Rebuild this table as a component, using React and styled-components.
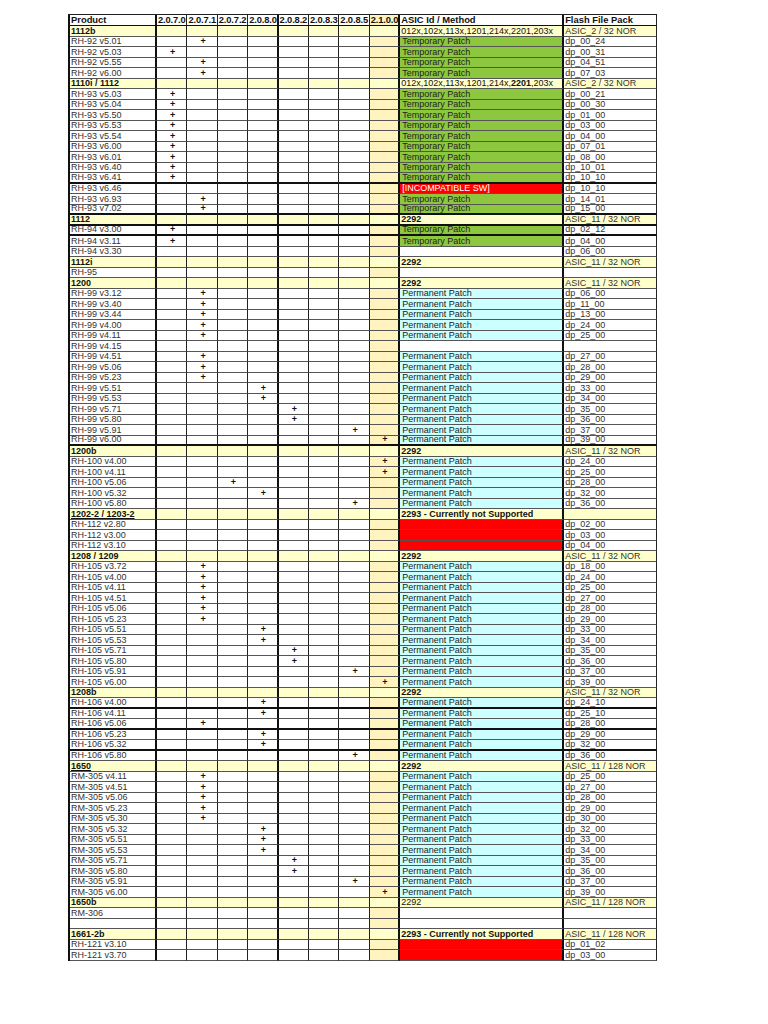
import styled, { createGlobalStyle } from "styled-components";

const GlobalStyle = createGlobalStyle`
    html, body {
        margin: 0;
        padding: 0;
        background: #fff;
    }
    body {
        font-family: "Liberation Sans", Arial, sans-serif;
    }
`

const VERSIONS = ['2.0.7.0', '2.0.7.1', '2.0.7.2', '2.0.8.0', '2.0.8.2', '2.0.8.3', '2.0.8.5', '2.1.0.0'];

// columns that end with a heavy rule
const THICK_AFTER = { product: true, 3: true, 7: true, asic: true };

const YELLOW = '#FFFFCC';
const COL_YELLOW = '#FFF4C0';
const GREEN = '#8DC63F';
const CYAN = '#CCFFFF';
const RED = '#FF0000';

const OLD_ASIC = '012x,102x,113x,1201,214x,2201,203x';

const g = (name, asic, flash, opts = {}) => ({ type: 'group', name, asic, flash, ...opts });
const r = (name, v, method, flash, heavy) => ({ type: 'item', name, v, method, flash, heavy });

const ROWS = [
    g('1112b', OLD_ASIC, 'ASIC_2 / 32 NOR', { plainAsic: true }),
    r('RH-92 v5.01', 1, 'tp', 'dp_00_24'),
    r('RH-92 v5.03', 0, 'tp', 'dp_00_31'),
    r('RH-92 v5.55', 1, 'tp', 'dp_04_51'),
    r('RH-92 v6.00', 1, 'tp', 'dp_07_03'),
    g('1110i / 1112', 'bold2201', 'ASIC_2 / 32 NOR', { plainAsic: true }),
    r('RH-93 v5.03', 0, 'tp', 'dp_00_21'),
    r('RH-93 v5.04', 0, 'tp', 'dp_00_30'),
    r('RH-93 v5.50', 0, 'tp', 'dp_01_00'),
    r('RH-93 v5.53', 0, 'tp', 'dp_03_00'),
    r('RH-93 v5.54', 0, 'tp', 'dp_04_00'),
    r('RH-93 v6.00', 0, 'tp', 'dp_07_01'),
    r('RH-93 v6.01', 0, 'tp', 'dp_08_00'),
    r('RH-93 v6.40', 0, 'tp', 'dp_10_01'),
    r('RH-93 v6.41', 0, 'tp', 'dp_10_10', true),
    r('RH-93 v6.46', -1, 'inc', 'dp_10_10'),
    r('RH-93 v6.93', 1, 'tp', 'dp_14_01'),
    r('RH-93 v7.02', 1, 'tp', 'dp_15_00', true),
    g('1112', '2292', 'ASIC_11 / 32 NOR', { heavy: true }),
    r('RH-94 v3.00', 0, 'tp', 'dp_02_12', true),
    r('RH-94 v3.11', 0, 'tp', 'dp_04_00'),
    r('RH-94 v3.30', -1, 'none', 'dp_06_00'),
    g('1112i', '2292', 'ASIC_11 / 32 NOR'),
    r('RH-95', -1, 'none', ''),
    g('1200', '2292', 'ASIC_11 / 32 NOR'),
    r('RH-99 v3.12', 1, 'pp', 'dp_06_00'),
    r('RH-99 v3.40', 1, 'pp', 'dp_11_00'),
    r('RH-99 v3.44', 1, 'pp', 'dp_13_00'),
    r('RH-99 v4.00', 1, 'pp', 'dp_24_00'),
    r('RH-99 v4.11', 1, 'pp', 'dp_25_00'),
    r('RH-99 v4.15', -1, 'none', ''),
    r('RH-99 v4.51', 1, 'pp', 'dp_27_00'),
    r('RH-99 v5.06', 1, 'pp', 'dp_28_00'),
    r('RH-99 v5.23', 1, 'pp', 'dp_29_00'),
    r('RH-99 v5.51', 3, 'pp', 'dp_33_00'),
    r('RH-99 v5.53', 3, 'pp', 'dp_34_00'),
    r('RH-99 v5.71', 4, 'pp', 'dp_35_00'),
    r('RH-99 v5.80', 4, 'pp', 'dp_36_00'),
    r('RH-99 v5.91', 6, 'pp', 'dp_37_00'),
    r('RH-99 v6.00', 7, 'pp', 'dp_39_00', true),
    g('1200b', '2292', 'ASIC_11 / 32 NOR'),
    r('RH-100 v4.00', 7, 'pp', 'dp_24_00'),
    r('RH-100 v4.11', 7, 'pp', 'dp_25_00'),
    r('RH-100 v5.06', 2, 'pp', 'dp_28_00'),
    r('RH-100 v5.32', 3, 'pp', 'dp_32_00'),
    r('RH-100 v5.80', 6, 'pp', 'dp_36_00'),
    g('1202-2 / 1203-2', '2293 - Currently not Supported', '', { underline: true }),
    r('RH-112 v2.80', -1, 'red', 'dp_02_00'),
    r('RH-112 v3.00', -1, 'red', 'dp_03_00'),
    r('RH-112 v3.10', -1, 'red', 'dp_04_00'),
    g('1208 / 1209', '2292', 'ASIC_11 / 32 NOR'),
    r('RH-105 v3.72', 1, 'pp', 'dp_18_00'),
    r('RH-105 v4.00', 1, 'pp', 'dp_24_00'),
    r('RH-105 v4.11', 1, 'pp', 'dp_25_00'),
    r('RH-105 v4.51', 1, 'pp', 'dp_27_00'),
    r('RH-105 v5.06', 1, 'pp', 'dp_28_00'),
    r('RH-105 v5.23', 1, 'pp', 'dp_29_00'),
    r('RH-105 v5.51', 3, 'pp', 'dp_33_00'),
    r('RH-105 v5.53', 3, 'pp', 'dp_34_00'),
    r('RH-105 v5.71', 4, 'pp', 'dp_35_00'),
    r('RH-105 v5.80', 4, 'pp', 'dp_36_00'),
    r('RH-105 v5.91', 6, 'pp', 'dp_37_00'),
    r('RH-105 v6.00', 7, 'pp', 'dp_39_00'),
    g('1208b', '2292', 'ASIC_11 / 32 NOR'),
    r('RH-106 v4.00', 3, 'pp', 'dp_24_10', true),
    r('RH-106 v4.11', 3, 'pp', 'dp_25_10'),
    r('RH-106 v5.06', 1, 'pp', 'dp_28_00', true),
    r('RH-106 v5.23', 3, 'pp', 'dp_29_00'),
    r('RH-106 v5.32', 3, 'pp', 'dp_32_00', true),
    r('RH-106 v5.80', 6, 'pp', 'dp_36_00'),
    g('1650', '2292', 'ASIC_11 / 128 NOR', { underline: true }),
    r('RM-305 v4.11', 1, 'pp', 'dp_25_00'),
    r('RM-305 v4.51', 1, 'pp', 'dp_27_00'),
    r('RM-305 v5.06', 1, 'pp', 'dp_28_00'),
    r('RM-305 v5.23', 1, 'pp', 'dp_29_00'),
    r('RM-305 v5.30', 1, 'pp', 'dp_30_00'),
    r('RM-305 v5.32', 3, 'pp', 'dp_32_00'),
    r('RM-305 v5.51', 3, 'pp', 'dp_33_00'),
    r('RM-305 v5.53', 3, 'pp', 'dp_34_00'),
    r('RM-305 v5.71', 4, 'pp', 'dp_35_00'),
    r('RM-305 v5.80', 4, 'pp', 'dp_36_00'),
    r('RM-305 v5.91', 6, 'pp', 'dp_37_00'),
    r('RM-305 v6.00', 7, 'pp', 'dp_39_00'),
    g('1650b', '2292', 'ASIC_11 / 128 NOR', { plainAsic: true }),
    r('RM-306', -1, 'none', ''),
    r('', -1, 'none', ''),
    g('1661-2b', '2293 - Currently not Supported', 'ASIC_11 / 128 NOR'),
    r('RH-121 v3.10', -1, 'red', 'dp_01_02'),
    r('RH-121 v3.70', -1, 'red', 'dp_03_00'),
];

const METHOD = {
    tp: { bg: GREEN, text: 'Temporary Patch' },
    pp: { bg: CYAN, text: 'Permanent Patch' },
    red: { bg: RED, text: '' },
    inc: { bg: RED, text: '[INCOMPATIBLE SW]', color: '#fff' },
    none: { bg: '#fff', text: '' },
};

const Page = styled.div`
    padding: 14px 0 40px 68px;
    background: #fff;
`

const Sheet = styled.div`
    display: grid;
    grid-template-columns: 87px repeat(8, 30.4px) 164px 93px;
    grid-template-rows: 11px;
    grid-auto-rows: 10.5px;
    width: max-content;
    border-top: 1px solid #222;
    border-left: 2px solid #111;
`

const Row = styled.div`
    display: contents;
`

const Cell = styled.div`
    box-sizing: border-box;
    min-width: 0;
    display: flex;
    align-items: flex-end;
    justify-content: ${props => props.$center ? 'center' : 'flex-start'};
    padding: 0 0 0 ${props => props.$center ? '0' : '1px'};
    background: ${props => props.$bg || '#fff'};
    border-right: ${props => props.$thick ? '2px solid #111' : '1px solid #222'};
    border-bottom: ${props => props.$heavy ? '2px solid #111' : '1px solid #555'};
    color: ${props => props.$color || '#333'};
    font-size: 9px;
    line-height: 9px;
    font-weight: ${props => props.$bold ? 700 : 400};
    text-decoration: ${props => props.$underline ? 'underline' : 'none'};
    white-space: nowrap;
    overflow: hidden;
`

const HeadCell = styled(Cell)`
    color: #111;
    font-weight: 700;
    font-size: 9.4px;
    line-height: 10px;
    border-bottom: 1px solid #111;
    letter-spacing: ${props => props.$tight ? '-0.15px' : '0'};
`

const Mark = styled.span`
    font-weight: 700;
    font-size: 9px;
    line-height: 8px;
    color: #111;
    transform: translate(1px, -1px);
`

const AsicText = styled.span`
    color: ${props => props.$color || '#222'};
    padding-left: 1px;
`

const Header = () => (
    <Row>
        <HeadCell $thick={THICK_AFTER.product}>Product</HeadCell>
        {VERSIONS.map((v, i) => (
            <HeadCell key={v} $tight $thick={THICK_AFTER[i]} $bg={i === 7 ? COL_YELLOW : '#fff'}>{v}</HeadCell>
        ))}
        <HeadCell $thick={THICK_AFTER.asic}>ASIC Id / Method</HeadCell>
        <HeadCell>Flash File Pack</HeadCell>
    </Row>
)

const GroupRow = ({ row }) => (
    <Row>
        <Cell $thick={THICK_AFTER.product} $bg={YELLOW} $bold $color="#111" $underline={row.underline} $heavy={row.heavy}>{row.name}</Cell>
        {VERSIONS.map((v, i) => (
            <Cell key={v} $thick={THICK_AFTER[i]} $bg={YELLOW} $heavy={row.heavy} />
        ))}
        <Cell $thick={THICK_AFTER.asic} $bg={YELLOW} $heavy={row.heavy} $bold={!row.plainAsic} $color="#111">
            {row.asic === 'bold2201'
                ? <span>012x,102x,113x,1201,214x,<b>2201</b>,203x</span>
                : row.asic}
        </Cell>
        <Cell $bg={YELLOW} $heavy={row.heavy} $color="#333">{row.flash}</Cell>
    </Row>
)

const ItemRow = ({ row }) => {
    const method = METHOD[row.method];
    return (
        <Row>
            <Cell $thick={THICK_AFTER.product} $heavy={row.heavy}>{row.name}</Cell>
            {VERSIONS.map((v, i) => (
                <Cell key={v} $center $thick={THICK_AFTER[i]} $heavy={row.heavy} $bg={i === 7 ? COL_YELLOW : '#fff'}>
                    {row.v === i ? <Mark>+</Mark> : null}
                </Cell>
            ))}
            <Cell $thick={THICK_AFTER.asic} $heavy={row.heavy} $bg={method.bg}>
                <AsicText $color={method.color}>{method.text}</AsicText>
            </Cell>
            <Cell $heavy={row.heavy}>{row.flash}</Cell>
        </Row>
    )
}

const App = () => {
    return (
        <Page>
            <GlobalStyle />
            <Sheet>
                <Header />
                {ROWS.map((row, idx) => (
                    row.type === 'group'
                        ? <GroupRow key={idx} row={row} />
                        : <ItemRow key={idx} row={row} />
                ))}
            </Sheet>
        </Page>
    )
}

export default App
